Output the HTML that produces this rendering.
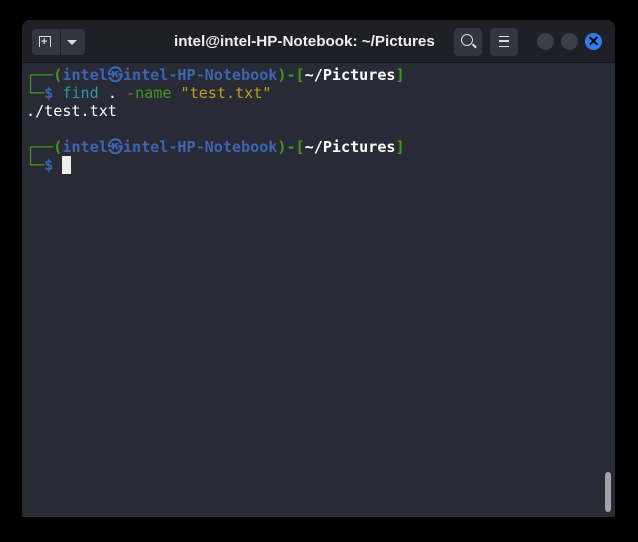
<!DOCTYPE html>
<html><head><style>
body{margin:0;width:638px;height:542px;background:#000;position:relative;overflow:hidden;font-family:"Liberation Sans",sans-serif}
.win{position:absolute;left:22px;top:20px;width:593px;height:497px;background:#282a36;border-radius:8px 8px 2px 2px;overflow:hidden}
.hdr{position:absolute;left:0;top:0;width:593px;height:42px;background:#1f2027;border-bottom:1px solid #15161b}
.btn{position:absolute;background:#34363f;border-radius:4px}
.title{position:absolute;left:152px;top:13px;color:#eee;font-weight:bold;font-size:15.2px;white-space:nowrap}
.term{position:absolute;left:4px;top:46px;font-family:"DejaVu Sans Mono",monospace;font-size:15.1px;line-height:18px;color:#fff;white-space:pre;font-weight:bold}
.g{color:#3f9a18}.b{color:#3c65b2}.c{color:#2a9ba0}.y{color:#c0a21a}.n{font-weight:normal}
.dot{position:absolute;top:13px;width:17px;height:17px;border-radius:50%;background:#3b3e48}
</style></head><body>
<div class="win">
<div class="hdr">
<div class="btn" style="left:10px;top:9px;width:53px;height:26px"></div>
<div style="position:absolute;left:38px;top:9px;width:1px;height:26px;background:#22232a"></div>
<div style="position:absolute;left:17px;top:16px;width:10px;height:10px;border:1.5px solid #ddd;border-bottom:none;border-right-width:1.5px"></div>
<div style="position:absolute;left:19px;top:16px;color:#ddd;font-size:11px;font-weight:bold">+</div>
<div style="position:absolute;left:45px;top:20px;border-left:5px solid transparent;border-right:5px solid transparent;border-top:5px solid #ddd"></div>
<div class="title">intel@intel-HP-Notebook: ~/Pictures</div>
<div class="btn" style="left:432px;top:8px;width:28px;height:28px"></div>
<div style="position:absolute;left:439px;top:14px;width:10px;height:10px;border:1.5px solid #ddd;border-radius:50%"></div>
<div style="position:absolute;left:450px;top:25px;width:5px;height:1.5px;background:#ddd;transform:rotate(45deg)"></div>
<div class="btn" style="left:468px;top:8px;width:28px;height:28px"></div>
<div style="position:absolute;left:477px;top:16px;width:10px;height:9px;border-top:1.5px solid #ddd;border-bottom:1.5px solid #ddd"></div>
<div style="position:absolute;left:477px;top:20px;width:10px;height:1.5px;background:#ddd"></div>
<div class="dot" style="left:515px"></div>
<div class="dot" style="left:539px"></div>
<div class="dot" style="left:563px;background:#2f7cf0;color:#000;font-size:14px;font-weight:bold;text-align:center;line-height:17px">✕</div>
</div>
<div class="term"><span class="g">┌──(</span><span class="b">intel㉿intel-HP-Notebook</span><span class="g">)-[</span>~/Pictures<span class="g">]</span>
<span class="g">└─</span><span class="b">$</span> <span class="c n">find</span><span class="n"> . </span><span class="g n">-name</span> <span class="y n">"test.txt"</span>
<span class="n">./test.txt</span>

<span class="g">┌──(</span><span class="b">intel㉿intel-HP-Notebook</span><span class="g">)-[</span>~/Pictures<span class="g">]</span>
<span class="g">└─</span><span class="b">$</span> <span style="background:#eee"> </span></div>
<div style="position:absolute;left:583px;top:452px;width:6px;height:40px;border-radius:3px;background:#a0a2a8"></div>
</div>
</body></html>
